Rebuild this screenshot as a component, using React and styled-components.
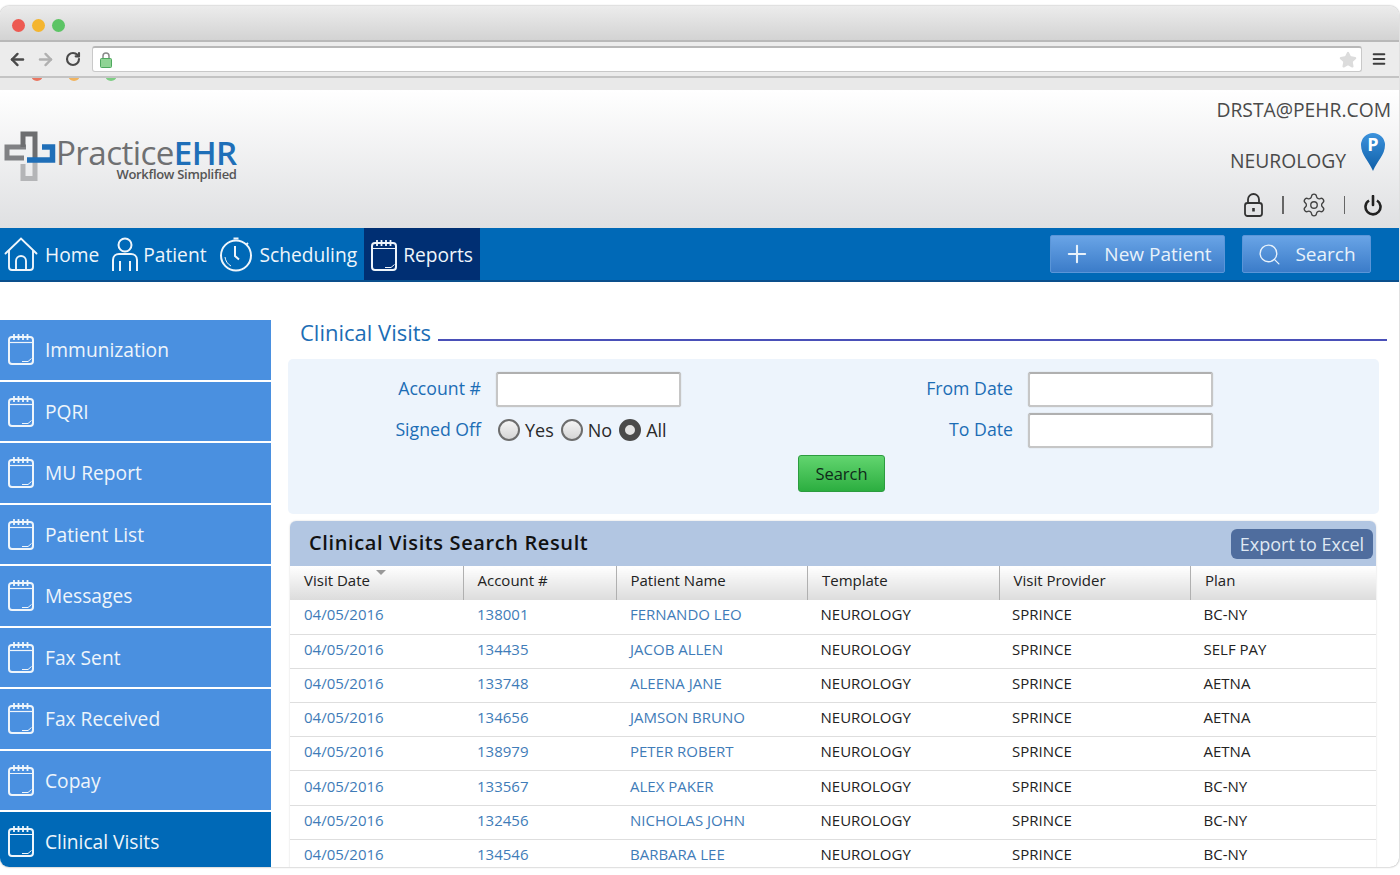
import React from "react";
import styled, { createGlobalStyle } from "styled-components";
import { Plus, Search as SearchIcon, Settings, Star, Menu, ArrowLeft, ArrowRight, RotateCw } from "lucide-react";

const GlobalStyle = createGlobalStyle`
  html, body { margin: 0; padding: 0; background: #fff; }
  body { font-family: "Open Sans", "Liberation Sans", sans-serif; }
  * { box-sizing: border-box; }
`;

const sideItems = ["Immunization", "PQRI", "MU Report", "Patient List", "Messages", "Fax Sent", "Fax Received", "Copay", "Clinical Visits"];

const columns = ["Visit Date", "Account #", "Patient Name", "Template", "Visit Provider", "Plan"];

const rows = [
  ["138001", "FERNANDO LEO", "BC-NY"],
  ["134435", "JACOB ALLEN", "SELF PAY"],
  ["133748", "ALEENA JANE", "AETNA"],
  ["134656", "JAMSON BRUNO", "AETNA"],
  ["138979", "PETER ROBERT", "AETNA"],
  ["133567", "ALEX PAKER", "BC-NY"],
  ["132456", "NICHOLAS JOHN", "BC-NY"],
  ["134546", "BARBARA LEE", "BC-NY"],
];

function CalendarIcon() {
  return (
    <svg width="26" height="33" viewBox="0 0 26 33" fill="none" stroke="currentColor" strokeWidth="2">
      <path d="M4 5h18a3 3 0 0 1 3 3v21a3 3 0 0 1-3 3H4a3 3 0 0 1-3-3V8a3 3 0 0 1 3-3z" />
      <path d="M1 10.500h24" strokeWidth="1.2" />
      <path d="M6 2v6M10.500 2v6M15 2v6M19.500 2v6" strokeWidth="1.8" />
      <path d="M14 29.500h6l3.500-3" strokeWidth="1" />
    </svg>
  );
}

function HomeIcon() {
  return (
    <svg width="34" height="34" viewBox="0 0 34 34" fill="none" stroke="currentColor" strokeWidth="1.9">
      <path d="M1.500 16.500 17 1.500l15.500 15" strokeLinecap="round" />
      <path d="M5 13v17a3 3 0 0 0 3 3h18a3 3 0 0 0 3-3V13" />
      <path d="M12 33V24a5 5 0 0 1 10 0v9" />
    </svg>
  );
}

function PatientIcon() {
  return (
    <svg width="28" height="35" viewBox="0 0 28 35" fill="none" stroke="currentColor" strokeWidth="2">
      <circle cx="14" cy="8" r="6.500" />
      <path d="M2 34V23c0-4 3-6 6-6h12c3 0 6 2 6 6v11" />
      <path d="M9 34V24M19 34V24" />
    </svg>
  );
}

function ClockIcon() {
  return (
    <svg width="34" height="36" viewBox="0 0 34 36" fill="none" stroke="currentColor" strokeWidth="2">
      <circle cx="17" cy="19.500" r="15" />
      <path d="M16 10v10l4 3.500" />
      <path d="M14.500 2.500h5M29 7l-2 2" strokeWidth="1.8" />
      <path d="M6 21c.5 4 2.500 7 6 9" strokeWidth="1" />
    </svg>
  );
}

function LockIcon() {
  return (
    <svg width="19" height="24" viewBox="0 0 19 24" fill="none" stroke="#333" strokeWidth="1.8">
      <path d="M4 10V6.500a5.500 5.500 0 0 1 11 0V10" />
      <rect x="1" y="10" width="17" height="13" rx="2.500" />
      <path d="M9.500 15v3.500" strokeWidth="2.600" />
    </svg>
  );
}

function PowerIcon() {
  return (
    <svg width="18" height="21" viewBox="0 0 18 21" fill="none" stroke="#222" strokeWidth="2.600">
      <path d="M5 5.500a7.500 7.500 0 1 0 8 0" />
      <path d="M9 1v9" strokeLinecap="round" />
    </svg>
  );
}

function AddressLock() {
  return (
    <svg width="12" height="16" viewBox="0 0 12 16" fill="none">
      <path d="M3 7V4a3 3 0 0 1 6 0v3" stroke="#8a8a8a" strokeWidth="1.500" />
      <rect x="0.500" y="6.500" width="11" height="9" rx="1" fill="#8fd494" stroke="#4fa85f" />
    </svg>
  );
}

function PinIcon() {
  return (
    <svg width="26" height="40" viewBox="0 0 26 40">
      <defs>
        <linearGradient id="pin" x1="0" y1="0" x2="0" y2="1">
          <stop offset="0" stopColor="#3c92dc" />
          <stop offset="1" stopColor="#0f5fa8" />
        </linearGradient>
      </defs>
      <path d="M13 39C9 29 1 23 1 13a12 12 0 0 1 24 0c0 10-8 16-12 26z" fill="url(#pin)" />
      <text x="13" y="19" textAnchor="middle" fontSize="18" fontWeight="700" fontFamily="Open Sans" fill="#fff">P</text>
    </svg>
  );
}

function LogoCross() {
  return (
    <svg width="52" height="52" viewBox="0 0 52 52" fill="none" strokeWidth="5">
      <path d="M19 34V48.500H31V30" stroke="#b4b5b7" />
      <path d="M22 17H3V28H20" stroke="#808184" />
      <path d="M19 17V4H31V30" stroke="#6d6e70" />
      <path d="M23 30H48.500V17H38" stroke="#1f6fb8" strokeWidth="5.500" />
    </svg>
  );
}

function Radio({ label, checked }) {
  return (
    <RadioLabel>
      <RadioDot $checked={checked} />
      {label}
    </RadioLabel>
  );
}

export default function App() {
  return (
    <>
      <GlobalStyle />
      <Page>
        <BrowserWindow>
          <TitleBar>
            <Light $color="#ed5a52" />
            <Light $color="#f4b52f" />
            <Light $color="#5cc465" />
          </TitleBar>
          <ToolBar>
            <ToolIcon $color="#4a4a4a"><ArrowLeft size={19} strokeWidth={3} /></ToolIcon>
            <ToolIcon $color="#b0b0b0"><ArrowRight size={19} strokeWidth={3} /></ToolIcon>
            <ToolIcon $color="#4a4a4a"><RotateCw size={16} strokeWidth={3.2} /></ToolIcon>
            <AddressBar>
              <AddressLock />
              <Star size={18} color="#dcdcdc" fill="#dcdcdc" />
            </AddressBar>
            <ToolIcon $color="#3d3d3d"><Menu size={16} strokeWidth={3} /></ToolIcon>
          </ToolBar>
          <Strip>
            <StripDot $color="#e8593f" />
            <StripDot $color="#f2a63c" />
            <StripDot $color="#63c76a" />
          </Strip>

          <Header>
            <Logo>
              <LogoCross />
              <LogoText>
                <LogoName>Practice<b>EHR</b></LogoName>
                <LogoTag>Workflow Simplified</LogoTag>
              </LogoText>
            </Logo>
            <UserBlock>
              <UserMail>DRSTA@PEHR.COM</UserMail>
              <UserDept>NEUROLOGY <PinIcon /></UserDept>
              <UserTools>
                <LockIcon />
                <Divider />
                <GearIcon size={26} strokeWidth={1.25} color="#444" />
                <Divider />
                <PowerIcon />
              </UserTools>
            </UserBlock>
          </Header>

          <NavBar>
            <NavItem $gap={7} $after={12}><HomeIcon />Home</NavItem>
            <NavItem $gap={4} $after={12}><PatientIcon />Patient</NavItem>
            <NavItem $gap={7} $after={7}><ClockIcon />Scheduling</NavItem>
            <NavItem $gap={6} $after={0} $active><CalendarIcon />Reports</NavItem>
            <NavActions>
              <NavButton $width={175}><Plus size={28} strokeWidth={1.8} />New Patient</NavButton>
              <NavButton $width={129}><SearchIcon size={25} strokeWidth={1.3} />Search</NavButton>
            </NavActions>
          </NavBar>

          <Body>
            <Sidebar>
              {sideItems.map((item) => (
                <SideItem key={item} $active={item === "Clinical Visits"}>
                  <CalendarIcon />
                  {item}
                </SideItem>
              ))}
            </Sidebar>

            <Main>
              <SectionTitle>
                <h2>Clinical Visits</h2>
                <span />
              </SectionTitle>

              <SearchPanel>
                <FormGrid>
                  <FieldLabel>Account #</FieldLabel>
                  <TextField />
                  <FieldLabel>From Date</FieldLabel>
                  <TextField />
                  <FieldLabel>Signed Off</FieldLabel>
                  <RadioGroup>
                    <Radio label="Yes" />
                    <Radio label="No" />
                    <Radio label="All" checked />
                  </RadioGroup>
                  <FieldLabel>To Date</FieldLabel>
                  <TextField />
                </FormGrid>
                <SearchButton>Search</SearchButton>
              </SearchPanel>

              <Results>
                <ResultsHead>
                  <h3>Clinical Visits Search Result</h3>
                  <ExportButton>Export to Excel</ExportButton>
                </ResultsHead>
                <Table>
                  <thead>
                    <tr>
                      {columns.map((col, i) => (
                        <Th key={col}>
                          {col}
                          {i === 0 && <SortMark />}
                        </Th>
                      ))}
                    </tr>
                  </thead>
                  <tbody>
                    {rows.map((row) => (
                      <tr key={row[0]}>
                        <Td $link>04/05/2016</Td>
                        <Td $link>{row[0]}</Td>
                        <Td $link>{row[1]}</Td>
                        <Td>NEUROLOGY</Td>
                        <Td>SPRINCE</Td>
                        <Td>{row[2]}</Td>
                      </tr>
                    ))}
                  </tbody>
                </Table>
              </Results>
            </Main>
          </Body>
        </BrowserWindow>
      </Page>
    </>
  );
}

const Page = styled.div`
  width: 1400px;
  height: 875px;
  padding-top: 6px;
  overflow: hidden;
  background: #fff;
`;

const BrowserWindow = styled.div`
  width: 1399px;
  height: 861px;
  border-radius: 9px;
  overflow: hidden;
  background: #fff;
  box-shadow: 0 0 2px rgba(0, 0, 0, 0.45);
`;

const TitleBar = styled.div`
  height: 36px;
  display: flex;
  align-items: center;
  gap: 7px;
  padding: 4px 0 0 12px;
  background: linear-gradient(#ececec, #d3d3d3);
  border-bottom: 2px solid #b9b9b9;
`;

const Light = styled.span`
  width: 13px;
  height: 13px;
  border-radius: 50%;
  background: ${(p) => p.$color};
`;

const ToolBar = styled.div`
  height: 36px;
  display: flex;
  align-items: center;
  padding: 0 6px 0 3px;
  background: #ececec;
  border-bottom: 2px solid #c4c4c4;
`;

const ToolIcon = styled.span`
  width: 28px;
  display: flex;
  justify-content: center;
  color: ${(p) => p.$color};
`;

const AddressBar = styled.div`
  flex: 1;
  height: 26px;
  margin: 0 3px 0 5px;
  padding: 0 4px 0 7px;
  display: flex;
  align-items: center;
  justify-content: space-between;
  background: #fff;
  border: 1px solid #c9c9c9;
  border-top: 2px solid #b8b8b8;
  border-radius: 3px;
`;

const Strip = styled.div`
  height: 12px;
  display: flex;
  gap: 25px;
  padding-left: 31px;
  background: #e9e9e9;
  overflow: hidden;
`;

const StripDot = styled.span`
  width: 12px;
  height: 12px;
  margin-top: -9px;
  border-radius: 50%;
  background: ${(p) => p.$color};
  opacity: 0.8;
`;

const Header = styled.header`
  height: 138px;
  display: flex;
  justify-content: space-between;
  background: linear-gradient(#fff, #dfe0e2);
`;

const Logo = styled.div`
  display: flex;
  align-items: flex-start;
  padding: 40px 0 0 4px;
`;

const LogoText = styled.div`
  display: flex;
  flex-direction: column;
  align-items: flex-end;
  margin: 9px 0 0 0;
`;

const LogoName = styled.div`
  font-size: 33.200px;
  line-height: 28px;
  letter-spacing: -0.6px;
  color: #6f7072;

  b {
    font-weight: 600;
    color: #1f6fb8;
  }
`;

const LogoTag = styled.div`
  font-size: 13px;
  line-height: 14px;
  font-weight: 600;
  letter-spacing: -0.3px;
  color: #555;
`;

const UserBlock = styled.div`
  display: flex;
  flex-direction: column;
  align-items: flex-end;
  padding: 9px 8px 0 0;
  color: #4a4a4a;
`;

const UserMail = styled.div`
  font-size: 19.300px;
  line-height: 22px;
`;

const UserDept = styled.div`
  display: flex;
  align-items: flex-end;
  gap: 14px;
  height: 40px;
  margin: 11px 5px 0 0;
  font-size: 19.300px;
  line-height: 22px;
`;

const UserTools = styled.div`
  display: flex;
  align-items: center;
  gap: 19px;
  height: 24px;
  margin: 21px 9px 0 0;
`;

const GearIcon = styled(Settings)`
  margin: 0 -2px;
`;

const Divider = styled.span`
  width: 1.500px;
  height: 18px;
  background: #666;
`;

const NavBar = styled.nav`
  height: 54px;
  display: flex;
  align-items: center;
  padding-left: 4px;
  background: #0069b7;
  border-bottom: 2px solid #0a4f8c;
  color: #eef5fb;
`;

const NavItem = styled.div`
  height: 52px;
  display: flex;
  align-items: center;
  gap: ${(p) => p.$gap}px;
  margin-right: ${(p) => p.$after}px;
  padding: 0 ${(p) => (p.$active ? "7px" : "0")};
  font-size: 19.200px;
  background: ${(p) => (p.$active ? "#002f73" : "transparent")};
`;

const NavActions = styled.div`
  display: flex;
  gap: 17px;
  margin-left: auto;
  padding-right: 28px;
`;

const NavButton = styled.button`
  width: ${(p) => p.$width}px;
  height: 38px;
  display: flex;
  align-items: center;
  justify-content: center;
  gap: 13px;
  font: inherit;
  font-size: 19px;
  color: #e8f2fb;
  background: linear-gradient(#69a4e6, #3b7cc9);
  border: 1px solid #5a95d8;
  border-radius: 2px;
`;

const Body = styled.div`
  display: grid;
  grid-template-columns: 271px 1fr;
  padding-top: 38px;
`;

const Sidebar = styled.aside`
  display: flex;
  flex-direction: column;
  gap: 2px;
`;

const SideItem = styled.div`
  height: 59.500px;
  display: flex;
  align-items: center;
  gap: 11px;
  padding-left: 8px;
  font-size: 19.200px;
  color: #eef5fb;
  background: ${(p) => (p.$active ? "#0069b7" : "#4a90e0")};

  svg { margin-top: -2px; }
`;

const Main = styled.main`
  padding: 0 20px 0 17px;
  min-width: 0;
`;

const SectionTitle = styled.div`
  display: flex;
  align-items: flex-start;
  gap: 7px;
  height: 39px;
  padding-left: 12px;

  h2 {
    margin: 0;
    font-size: 22px;
    line-height: 24px;
    font-weight: 400;
    color: #1c6db5;
  }

  span {
    flex: 1;
    height: 2px;
    margin-top: 19px;
    margin-right: -8px;
    background: #4a50b8;
  }
`;

const SearchPanel = styled.section`
  height: 155px;
  padding-top: 13px;
  background: #edf4fc;
  border-radius: 5px;
`;

const FormGrid = styled.div`
  display: grid;
  grid-template-columns: 193px 185px 317px 185px;
  grid-template-rows: 35px 35px;
  column-gap: 15px;
  row-gap: 6px;
  align-items: center;
`;

const FieldLabel = styled.label`
  padding-bottom: 3px;
  text-align: right;
  font-size: 17.700px;
  color: #1c6db5;
`;

const TextField = styled.div`
  height: 35px;
  background: #fff;
  border: 2px solid #c6c6c6;
  border-top-color: #b0b0b0;
  border-radius: 3px;
  box-shadow: 0 0 1px #aaa;
`;

const RadioGroup = styled.div`
  display: flex;
  align-items: center;
  gap: 7px;
  margin: 0 0 2px 2px;
`;

const RadioLabel = styled.span`
  display: flex;
  align-items: center;
  gap: 5px;
  font-size: 18px;
  color: #2a2a2a;
`;

const RadioDot = styled.span`
  width: 22px;
  height: 22px;
  border-radius: 50%;
  border: ${(p) => (p.$checked ? "6.500px solid #4a4a4a" : "2px solid #6d6d6d")};
  background: ${(p) => (p.$checked ? "#e2e2e2" : "linear-gradient(#f5f5f5, #d5d5d5)")};
`;

const SearchButton = styled.button`
  display: block;
  width: 87px;
  height: 37px;
  margin: 7px 0 0 510px;
  font: inherit;
  font-size: 16.500px;
  color: #0f2a1a;
  background: linear-gradient(#62d56f, #2cae40);
  border: 1px solid #2c9c3f;
  border-radius: 3px;
`;

const Results = styled.section`
  width: 1086px;
  margin: 7px 0 0 2px;
  box-shadow: 0 0 2px rgba(0, 0, 0, 0.18);
  border-radius: 6px 6px 0 0;
`;

const ResultsHead = styled.div`
  height: 45px;
  display: flex;
  align-items: center;
  justify-content: space-between;
  padding: 0 3px 0 19px;
  background: #b2c6e2;
  border-radius: 6px 6px 0 0;

  h3 {
    margin: 0 0 2px;
    font-size: 20px;
    font-weight: 600;
    letter-spacing: 0.62px;
    color: #111;
  }
`;

const ExportButton = styled.button`
  width: 142px;
  height: 30px;
  padding: 0;
  font: inherit;
  font-size: 18px;
  color: #dfe8f3;
  background: #4f6d9e;
  border: 0;
  border-radius: 6px;
`;

const Table = styled.table`
  width: 100%;
  table-layout: fixed;
  border-collapse: collapse;

  th:nth-child(1) { width: 173px; }
  th:nth-child(2) { width: 153px; }
  th:nth-child(3), th:nth-child(4), th:nth-child(5) { width: 191.500px; }
  td:nth-child(n + 4) { padding-left: 13px; }
`;

const Th = styled.th`
  position: relative;
  height: 34px;
  padding: 0 0 7px 14px;
  text-align: left;
  font-size: 15px;
  font-weight: 400;
  color: #222;
  background: linear-gradient(#fff, #dcdcdc);
  border-right: 1px solid #b0b0b0;
  &:last-child { border-right: 0; }
`;

const SortMark = styled.i`
  position: absolute;
  top: 4px;
  left: 86px;
  border: 5px solid transparent;
  border-top-color: #999;
`;

const Td = styled.td`
  height: 34.200px;
  padding: 0 0 5px 14px;
  font-size: 15px;
  color: ${(p) => (p.$link ? "#3f7cb8" : "#222")};
  border-bottom: 1px solid #dedede;
  background: #fff;
  white-space: nowrap;
`;
